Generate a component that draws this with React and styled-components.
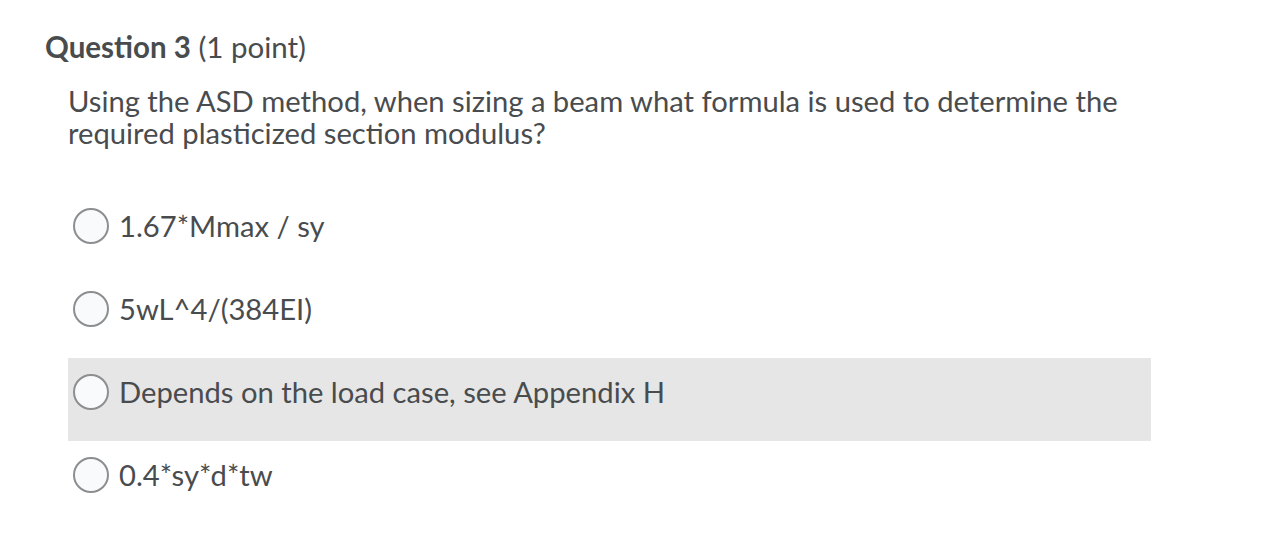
import React from 'react';
import styled, { createGlobalStyle } from 'styled-components';

const GlobalStyle = createGlobalStyle`
  body {
    margin: 0;
    background: #ffffff;
    font-family: Lato, "Noto Sans", sans-serif;
    color: #494c4e;
  }
`;

const options = [
  { id: 1, label: '1.67*Mmax / sy' },
  { id: 2, label: '5wL^4/(384EI)' },
  { id: 3, label: 'Depends on the load case, see Appendix H', hovered: true },
  { id: 4, label: '0.4*sy*d*tw' },
];

function App() {
  return (
    <Page>
      <GlobalStyle />
      <Heading>
        <strong>Question 3</strong> (1 point)
      </Heading>
      <Body>
        <Prompt>
          Using the ASD method, when sizing a beam what formula is used to determine the
          required plasticized section modulus?
        </Prompt>
        <OptionList>
          {options.map((opt) => (
            <OptionRow key={opt.id} $hovered={opt.hovered}>
              <Radio type="radio" name="q3" />
              <OptionLabel>{opt.label}</OptionLabel>
            </OptionRow>
          ))}
        </OptionList>
      </Body>
    </Page>
  );
}

const Page = styled.div`
  padding: 31px 0 0 45px;
  width: 1106px;
`;

const Heading = styled.h2`
  margin: 0;
  font-size: 29.5px;
  line-height: 32px;
  font-weight: 400;
  color: #494c4e;

  strong {
    font-weight: 700;
  }
`;

const Body = styled.div`
  padding-left: 23px;
  margin-top: 22px;
`;

const Prompt = styled.p`
  margin: 0;
  width: 1083px;
  font-size: 29.2px;
  line-height: 32px;
`;

const OptionList = styled.div`
  margin-top: 43px;
  display: flex;
  flex-direction: column;
`;

const OptionRow = styled.label`
  display: flex;
  align-items: center;
  gap: 10px;
  height: 83px;
  box-sizing: border-box;
  padding: 16px 5px 31px;
  background: ${(p) => (p.$hovered ? '#e6e6e6' : 'transparent')};
`;

const Radio = styled.input`
  appearance: none;
  margin: 0;
  width: 36px;
  height: 36px;
  box-sizing: border-box;
  border-radius: 50%;
  border: 2px solid #8c8e90;
  background: #f9fafc;
  flex-shrink: 0;
`;

const OptionLabel = styled.span`
  font-size: 29.2px;
  line-height: 34px;
  color: #494c4e;
`;

export default App;
